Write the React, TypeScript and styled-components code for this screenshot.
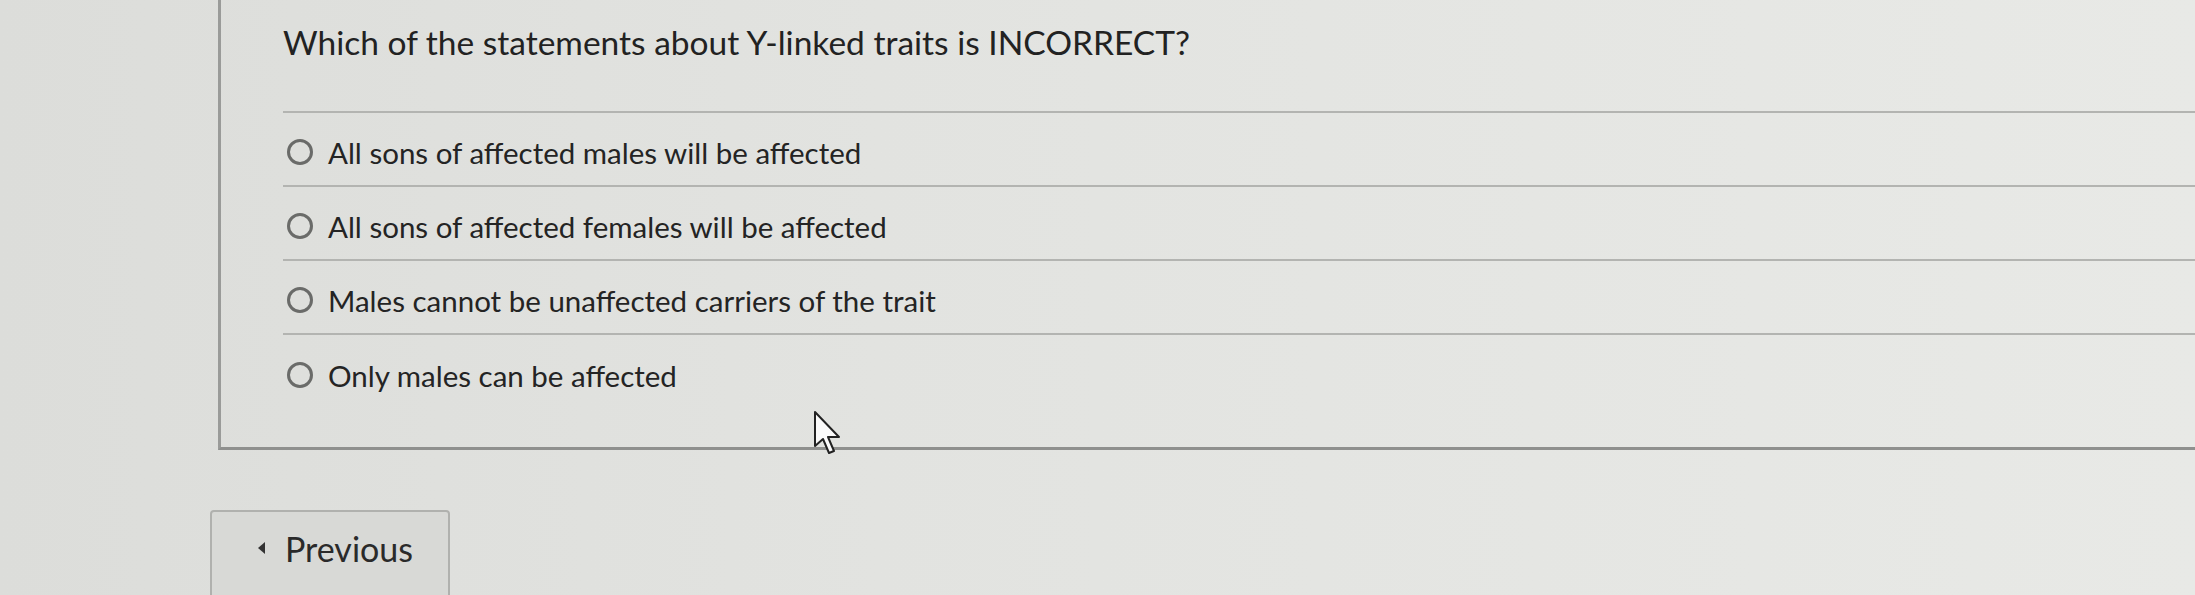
import React from "react";
import styled, { createGlobalStyle } from "styled-components";

const Global = createGlobalStyle`
  html, body {
    margin: 0;
    padding: 0;
    width: 2195px;
    height: 595px;
    overflow: hidden;
    background: #e3e4e1;
    font-family: Lato, "Open Sans", sans-serif;
  }
`;

const Page = styled.div`
  position: relative;
  width: 2195px;
  height: 595px;
  background: linear-gradient(90deg, #dcddda 0%, #e2e3e0 40%, #e8e9e6 100%);
  padding-left: 218px;
  box-sizing: border-box;
  overflow: hidden;
`;

const Card = styled.section`
  width: 2100px;
  height: 450px;
  box-sizing: border-box;
  border-left: 3px solid #9a9b99;
  border-bottom: 3px solid #8f908e;
  padding: 22px 0 0 62px;
`;

const Question = styled.h2`
  margin: 0;
  height: 91px;
  font-size: 33.5px;
  font-weight: 400;
  color: #222;
  border-bottom: 2px solid #b3b4b1;
  box-sizing: border-box;
`;

const Options = styled.ul`
  list-style: none;
  margin: 0;
  padding: 0;
`;

const Option = styled.li<{ $last?: boolean }>`
  display: flex;
  align-items: center;
  gap: 15px;
  height: 74px;
  padding: 6px 0 0 4px;
  box-sizing: border-box;
  border-bottom: ${(p) => (p.$last ? "none" : "2px solid #b3b4b1")};
  font-size: 29.5px;
  color: #242424;
`;

const Radio = styled.span`
  width: 20px;
  height: 20px;
  border: 3px solid #6a6b69;
  border-radius: 50%;
  flex: none;
`;

const Footer = styled.div`
  padding-top: 60px;
`;

const PrevButton = styled.button`
  display: flex;
  align-items: center;
  gap: 20px;
  margin-left: -8px;
  width: 240px;
  height: 120px;
  padding: 0 0 44px 46px;
  box-sizing: border-box;
  background: #d8d9d6;
  border: 2px solid #b0b1ae;
  border-radius: 4px;
  font-family: Lato, "Open Sans", sans-serif;
  font-size: 34px;
  color: #2a2a2a;
`;

const Caret = styled.span`
  width: 0;
  height: 0;
  border-top: 6px solid transparent;
  border-bottom: 6px solid transparent;
  border-right: 7px solid #333;
`;

const Cursor = styled.svg`
  position: absolute;
  left: 813px;
  top: 410px;
`;

const options = [
  "All sons of affected males will be affected",
  "All sons of affected females will be affected",
  "Males cannot be unaffected carriers of the trait",
  "Only males can be affected",
];

export default function App() {
  return (
    <>
      <Global />
      <Page>
        <Card>
          <Question>Which of the statements about Y-linked traits is INCORRECT?</Question>
          <Options>
            {options.map((o, i) => (
              <Option key={o} $last={i === options.length - 1}>
                <Radio />
                {o}
              </Option>
            ))}
          </Options>
        </Card>
        <Footer>
          <PrevButton>
            <Caret />
            Previous
          </PrevButton>
        </Footer>
        <Cursor width="30" height="46" viewBox="0 0 30 46">
          <path
            d="M2 2 L2 36 L10 29 L16 43 L21 41 L15 27 L26 27 Z"
            fill="#fafafa"
            stroke="#222"
            strokeWidth="2"
            strokeLinejoin="round"
          />
        </Cursor>
      </Page>
    </>
  );
}
